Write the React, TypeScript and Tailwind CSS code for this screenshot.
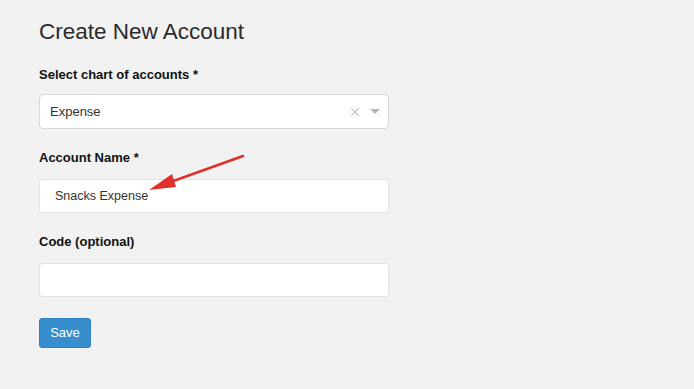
import { X } from "lucide-react";

const App = () => {
  return (
    <div className="relative min-h-[389px] w-full bg-[#f2f2f2] font-['Liberation_Sans',Arial,sans-serif] text-[#222]">
      <div className="w-[350px] pl-[39px] pt-[19px] box-content">
        <h1 className="text-[22.5px] leading-[26px] text-[#2b2b2b]">Create New Account</h1>

        <div className="mt-[22px]">
          <label className="block text-[13px] font-bold leading-[16px] text-[#111]">Select chart of accounts *</label>
          <div className="mt-[11px] flex h-[35px] items-center rounded-[4px] border border-[#d6d6d6] bg-white pl-[10px] pr-[8px]">
            <span className="flex-1 text-[13px] text-[#333]">Expense</span>
            <X className="h-[14px] w-[14px] text-[#b5b5b5]" strokeWidth={1.8} />
            <svg width="10" height="6" viewBox="0 0 10 6" className="ml-[8px]">
              <path d="M0 0 L10 0 L5 5 Z" fill="#b5b5b5" />
            </svg>
          </div>
        </div>

        <div className="mt-[21px]">
          <label className="block text-[13px] font-bold leading-[16px] text-[#111]">Account Name *</label>
          <div className="mt-[13px] flex h-[34px] items-center rounded-[3px] border border-[#e3e3e3] bg-white pl-[15px]">
            <span className="text-[12.5px] text-[#333]">Snacks Expense</span>
          </div>
        </div>

        <div className="mt-[21px]">
          <label className="block text-[13px] font-bold leading-[16px] text-[#111]">Code (optional)</label>
          <div className="mt-[13px] h-[34px] rounded-[3px] border border-[#e3e3e3] bg-white" />
        </div>

        <button className="mt-[21px] h-[30px] w-[52px] rounded-[3px] border border-[#2f80c2] bg-[#368ecf] text-[13px] text-white">
          Save
        </button>
      </div>

      <svg className="absolute left-0 top-0" width="694" height="389" viewBox="0 0 694 389">
        <line x1="243" y1="156" x2="165" y2="184" stroke="#e0302c" strokeWidth="2.5" strokeLinecap="round" />
        <path d="M149 190 L172 174 L176 187 Z" fill="#e0302c" />
      </svg>
    </div>
  );
};

export default App;
